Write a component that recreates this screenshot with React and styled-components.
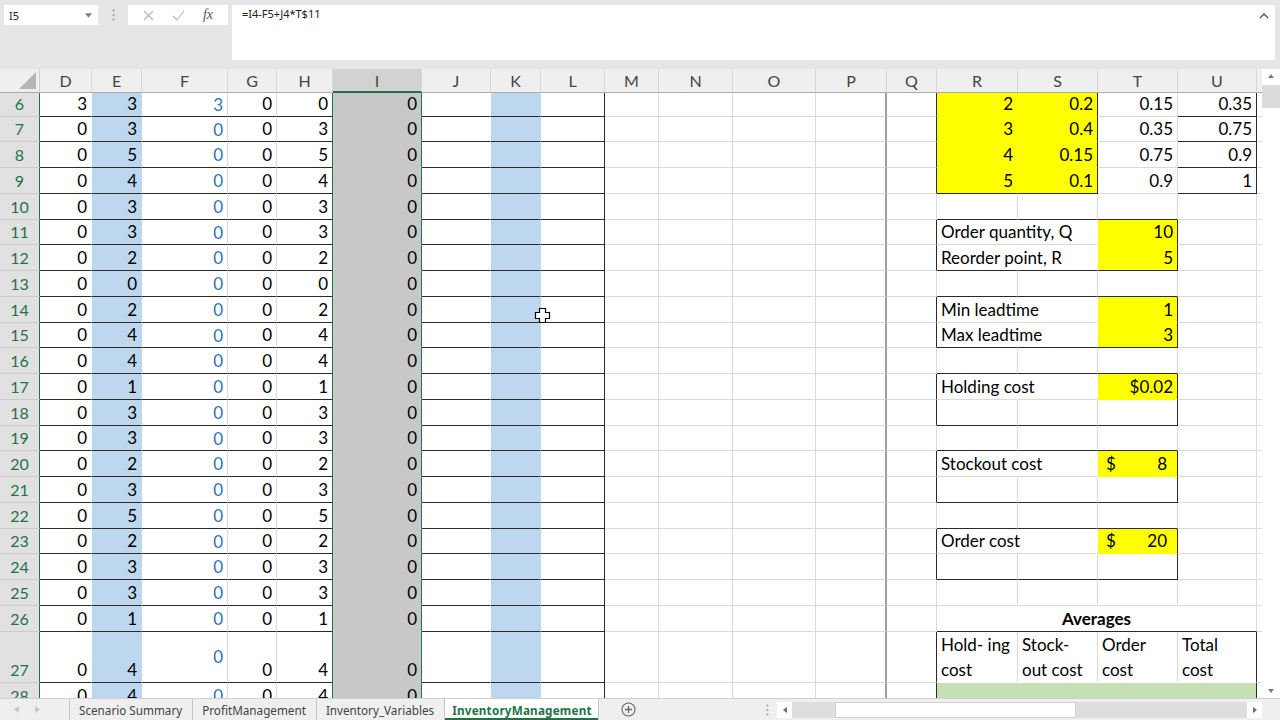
import React from 'react';
import styled, { createGlobalStyle, css } from 'styled-components';

const GRID = '#dadada';
const INK = '#2a2a2a';
const SEL_GREEN = '#217346';
const BLUE = '#bdd7ee';
const YELLOW = '#ffff00';
const GREEN_FILL = '#c6e0b4';
const SEL_GRAY = '#c8c8c8';

const COLS = ['D', 'E', 'F', 'G', 'H', 'I', 'J', 'K', 'L', 'M', 'N', 'O', 'P', 'Q', 'R', 'S', 'T', 'U', 'V'];
const WIDTHS = [52, 50, 86, 49, 56, 89, 69, 50, 64, 54, 74, 83, 71, 50, 81, 80, 80, 79];
const ROWS = Array.from({ length: 23 }, (_, i) => i + 6);

// ---- sheet data ----
const cells = {};
const get = (c, r) => (cells[c + r] = cells[c + r] || {});
const set = (c, r, props) => Object.assign(get(c, r), props);
const colIdx = c => COLS.indexOf(c);
const prevCol = c => COLS[colIdx(c) - 1];
const span = (a, b) => COLS.slice(colIdx(a), colIdx(b) + 1);

const box = (c1, c2, r1, r2) => {
  span(c1, c2).forEach(c => {
    get(c, r1 - 1).b = INK;
    get(c, r2).b = INK;
  });
  for (let r = r1; r <= r2; r++) {
    get(prevCol(c1), r).r = INK;
    get(c2, r).r = INK;
  }
};

const demand = [3, 3, 5, 4, 3, 3, 2, 0, 2, 4, 4, 1, 3, 3, 2, 3, 5, 2, 3, 3, 1, 4, 4];
ROWS.forEach((r, i) => {
  const first = i === 0;
  set('D', r, { v: first ? 3 : 0, b: INK });
  set('E', r, { v: demand[i], fill: BLUE, b: INK });
  set('F', r, { v: first ? 3 : 0, color: '#2e75b6', b: INK, valign: 'center' });
  set('G', r, { v: 0, b: INK });
  set('H', r, { v: first ? 0 : demand[i], b: INK, r: SEL_GREEN });
  set('I', r, { v: 0, fill: SEL_GRAY, r: SEL_GREEN });
  set('J', r, { b: INK });
  set('K', r, { fill: BLUE, b: INK });
  set('L', r, { b: INK, r: INK });
  set('P', r, { split: true });
});

[[2, 0.2, 0.15, 0.35], [3, 0.4, 0.35, 0.75], [4, 0.15, 0.75, 0.9], [5, 0.1, 0.9, 1]].forEach(
  ([a, b, c, d], i) => {
    const r = 6 + i;
    set('R', r, { v: a, fill: YELLOW });
    set('S', r, { v: b, fill: YELLOW });
    set('T', r, { v: c });
    set('U', r, { v: d, b: INK, r: INK });
  }
);
box('R', 'S', 6, 9);

const inputs = [
  [11, 'Order quantity, Q', { v: '10' }],
  [12, 'Reorder point, R', { v: '5' }],
  [14, 'Min leadtime', { v: '1' }],
  [15, 'Max leadtime', { v: '3' }],
  [17, 'Holding cost', { v: '$0.02' }],
  [20, 'Stockout cost', { acct: '8' }],
  [23, 'Order cost', { acct: '20' }],
];
inputs.forEach(([r, label, value]) => {
  set('R', r, { v: label, align: 'left', noGrid: true, over: true });
  set('S', r, { noGrid: true });
  set('T', r, { ...value, fill: YELLOW });
});
[[11, 12], [14, 15], [17, 18], [20, 21], [23, 24]].forEach(([a, b]) => box('R', 'T', a, b));

set('R', 26, { v: 'Averages', bold: true, align: 'center', span: 4 });
['S', 'T', 'U'].forEach(c => set(c, 26, { hidden: true }));
[['R', 'Hold- ing', 'cost'], ['S', 'Stock-', 'out cost'], ['T', 'Order', 'cost'], ['U', 'Total', 'cost']].forEach(
  ([c, a, b]) => set(c, 27, { lines: [a, b], align: 'left' })
);
span('R', 'U').forEach(c => set(c, 28, { fill: GREEN_FILL }));
box('R', 'U', 27, 28);

const rightOf = (c, r) => {
  const d = cells[c + r] || {};
  if (d.r) return d.r;
  if (d.fill || d.noGrid) return 'transparent';
  const next = cells[COLS[colIdx(c) + 1] + r];
  if (next && next.fill) return 'transparent';
  return GRID;
};
const belowOf = (c, r) => {
  const d = cells[c + r] || {};
  if (d.b) return d.b;
  if (d.fill) return 'transparent';
  const next = cells[c + (r + 1)];
  if (next && next.fill) return 'transparent';
  return GRID;
};

// ---- styles ----
const GlobalStyle = createGlobalStyle`
  html, body { margin: 0; padding: 0; }
  body {
    background: #e6e6e6;
    overflow: hidden;
    font-family: Lato, "Liberation Sans", sans-serif;
  }
`;

const Window = styled.div`
  width: 1280px;
  height: 720px;
  display: flex;
  flex-direction: column;
  background: #e6e6e6;
  overflow: hidden;
`;

const FormulaBar = styled.div`
  height: 69px;
  box-sizing: border-box;
  display: flex;
  align-items: flex-start;
  padding: 5px 5px 0 4px;
  font-family: "Noto Sans", "Open Sans", sans-serif;
  font-size: 11px;
  color: #222;
`;

const NameBox = styled.div`
  width: 94px;
  height: 20px;
  box-sizing: border-box;
  background: #fff;
  display: flex;
  align-items: center;
  justify-content: space-between;
  padding: 0 6px 0 5px;
`;

const Grip = styled.div`
  width: ${p => p.$w || 30}px;
  height: 20px;
  display: flex;
  align-items: center;
  justify-content: center;
`;

const FxBox = styled.div`
  width: 100px;
  height: 20px;
  background: #fff;
  display: flex;
  align-items: center;
  justify-content: space-around;
  padding: 0 6px;
  box-sizing: border-box;
`;

const Fx = styled.span`
  font-family: "Liberation Serif", serif;
  font-style: italic;
  font-size: 14px;
  color: #555;
`;

const FormulaInput = styled.div`
  flex: 1;
  height: 55px;
  margin-left: 4px;
  background: #fff;
  box-sizing: border-box;
  padding: 2px 6px 0 10px;
  display: flex;
  justify-content: space-between;
  align-items: flex-start;
  line-height: 14px;
`;

const SheetArea = styled.div`
  height: 629px;
  display: flex;
  background: #fff;
`;

const Grid = styled.div`
  position: relative;
  width: 1262px;
  display: grid;
  grid-template-columns: 40px ${WIDTHS.map(w => w + 'px').join(' ')} 1fr;
  grid-template-rows: 24px 23.7px repeat(20, 25.75px) 51.3px 25.75px;
  overflow: hidden;
  font-size: 17px;
  line-height: 19px;
`;

const Corner = styled.div`
  background: #efefef;
  border-right: 1px solid #cfcfcf;
  border-bottom: 1px solid #ababab;
  position: relative;
  &::after {
    content: '';
    position: absolute;
    right: 3px;
    bottom: 3px;
    border-style: solid;
    border-width: 0 0 17px 17px;
    border-color: transparent transparent #b5b5b5 transparent;
  }
`;

const ColHead = styled.div`
  background: #efefef;
  color: #444;
  font-size: 16px;
  display: flex;
  align-items: center;
  justify-content: center;
  border-right: 1px solid #d6d6d6;
  border-bottom: 1px solid #ababab;
  box-sizing: border-box;
  ${p =>
    p.$sel &&
    css`
      background: #d2d2d2;
      color: #1f5e37;
      border-bottom: 2px solid ${SEL_GREEN};
    `}
`;

const RowHead = styled.div`
  background: #e1e1e1;
  color: ${SEL_GREEN};
  font-size: 16px;
  display: flex;
  align-items: flex-end;
  justify-content: center;
  padding-bottom: 3px;
  box-sizing: border-box;
  border-right: 1px solid ${SEL_GREEN};
  border-bottom: 1px solid #cbcbcb;
`;

const Cell = styled.div`
  display: flex;
  align-items: ${p => (p.$valign === 'center' ? 'center' : 'flex-end')};
  justify-content: ${p =>
    p.$align === 'left' ? 'flex-start' : p.$align === 'center' ? 'center' : 'flex-end'};
  padding: 0 4px 3px;
  box-sizing: border-box;
  background: ${p => p.$fill || '#fff'};
  color: ${p => p.$color || '#000'};
  font-weight: ${p => (p.$bold ? 700 : 400)};
  white-space: nowrap;
  border-right: ${p => (p.$split ? '2px solid #9e9e9e' : `1px solid ${p.$r}`)};
  border-bottom: 1px solid ${p => p.$b};
  ${p => p.$span && css`grid-column: span ${p.$span};`}
  ${p => p.$over && css`position: relative; z-index: 1;`}
  ${p =>
    p.$valign === 'center' &&
    css`
      padding-bottom: 0;
    `}
`;

const Wrapped = styled.span`
  align-self: flex-start;
  white-space: normal;
  line-height: 25px;
`;

const Acct = styled.span`
  display: flex;
  justify-content: space-between;
  width: 100%;
  padding: 0 6px 0 4px;
`;

const Cursor = styled.svg`
  position: absolute;
  left: 534px;
  top: 238px;
  z-index: 3;
`;

const VScroll = styled.div`
  width: 18px;
  display: flex;
  flex-direction: column;
  background: #fff;
`;

const ScrollArrow = styled.div`
  height: 14px;
  display: flex;
  align-items: center;
  justify-content: center;
`;

const VThumb = styled.div`
  height: 23px;
  margin-top: 2px;
  background: #dcdcdc;
`;

const Spacer = styled.div`
  flex: ${p => (p.$fixed ? `0 0 ${p.$fixed}px` : 1)};
`;

const TabBar = styled.div`
  height: 22px;
  box-sizing: border-box;
  display: flex;
  align-items: stretch;
  background: #efefef;
  border-top: 1px solid #cfcfcf;
  font-family: "Noto Sans", "Open Sans", sans-serif;
  font-size: 11.7px;
  color: #444;
`;

const NavArrows = styled.div`
  width: 69px;
  display: flex;
  align-items: center;
  justify-content: center;
  gap: 14px;
  padding-right: 16px;
  box-sizing: border-box;
`;

const Tab = styled.div`
  display: flex;
  align-items: center;
  padding: 0 10px 0 9px;
  border-left: 1px solid #c6c6c6;
  ${p =>
    p.$active &&
    css`
      padding: 0 6px 0 7px;
      background: #fff;
      color: ${SEL_GREEN};
      font-weight: 700;
      letter-spacing: 0.2px;
      border-right: 1px solid #c6c6c6;
      box-shadow: inset 0 -2px 0 ${SEL_GREEN};
    `}
`;

const AddSheet = styled.div`
  width: 60px;
  display: flex;
  align-items: center;
  justify-content: center;
`;

const HScroll = styled.div`
  margin-left: auto;
  width: 523px;
  display: flex;
  align-items: center;
`;

const HTrack = styled.div`
  flex: 1;
  height: 16px;
  background: #dedede;
  display: flex;
  align-items: stretch;
`;

const HArrow = styled.div`
  width: 15px;
  background: #fff;
  display: flex;
  align-items: center;
  justify-content: center;
`;

const HThumb = styled.div`
  width: 241px;
  margin-left: 43px;
  background: #fff;
  border: 1px solid #d0d0d0;
  box-sizing: border-box;
`;

const Tri = ({ dir = 'down', color = '#777', size = 6 }) => {
  const pts = {
    down: '0,1 6,1 3,5',
    up: '0,5 6,5 3,1',
    left: '5,0 5,6 1,3',
    right: '1,0 1,6 5,3',
  }[dir];
  return (
    <svg width={size} height={size} viewBox="0 0 6 6">
      <polygon points={pts} fill={color} />
    </svg>
  );
};

const Dots = () => (
  <svg width="3" height="12" viewBox="0 0 3 12">
    {[1.5, 6, 10.5].map(y => (
      <circle key={y} cx="1.5" cy={y} r="1" fill="#9a9a9a" />
    ))}
  </svg>
);

const renderContent = d => {
  if (d.acct)
    return (
      <Acct>
        <span>$</span>
        <span>{d.acct}</span>
      </Acct>
    );
  if (d.lines)
    return (
      <Wrapped>
        {d.lines[0]}
        <br />
        {d.lines[1]}
      </Wrapped>
    );
  return d.v;
};

export default function App() {
  const tabs = ['Scenario Summary', 'ProfitManagement', 'Inventory_Variables', 'InventoryManagement'];
  return (
    <Window>
      <GlobalStyle />
      <FormulaBar>
        <NameBox>
          <span>I5</span>
          <Tri dir="down" color="#808080" size={7} />
        </NameBox>
        <Grip>
          <Dots />
        </Grip>
        <FxBox>
          <svg width="11" height="11" viewBox="0 0 11 11">
            <path d="M1 1l9 9M10 1l-9 9" stroke="#b8b8b8" strokeWidth="1.1" />
          </svg>
          <svg width="13" height="11" viewBox="0 0 13 11">
            <path d="M1 6l4 4L12 1" stroke="#b8b8b8" strokeWidth="1.1" fill="none" />
          </svg>
          <Fx>fx</Fx>
        </FxBox>
        <FormulaInput>
          <span>=I4-F5+J4*T$11</span>
          <svg width="10" height="8" viewBox="0 0 10 8" style={{ marginTop: 5 }}>
            <path d="M1 6l4-4 4 4" stroke="#555" strokeWidth="1.4" fill="none" />
          </svg>
        </FormulaInput>
      </FormulaBar>

      <SheetArea>
        <Grid>
          <Corner />
          {COLS.map(c => (
            <ColHead key={c} $sel={c === 'I'}>
              {c === 'V' ? '' : c}
            </ColHead>
          ))}
          {ROWS.map(r => (
            <React.Fragment key={r}>
              <RowHead>{r}</RowHead>
              {COLS.map(c => {
                const d = cells[c + r] || {};
                if (d.hidden) return null;
                const last = d.span ? COLS[colIdx(c) + d.span - 1] : c;
                return (
                  <Cell
                    key={c}
                    $fill={d.fill}
                    $color={d.color}
                    $align={d.align}
                    $valign={d.valign}
                    $bold={d.bold}
                    $span={d.span}
                    $over={d.over}
                    $split={d.split}
                    $r={rightOf(last, r)}
                    $b={belowOf(c, r)}
                  >
                    {renderContent(d)}
                  </Cell>
                );
              })}
            </React.Fragment>
          ))}
          <Cursor width="17" height="17" viewBox="0 0 17 17">
            <path
              d="M5.5 1.5h6v4h4v6h-4v4h-6v-4h-4v-6h4z"
              fill="#fff"
              stroke="#000"
              strokeWidth="1.2"
            />
          </Cursor>
        </Grid>
        <VScroll>
          <ScrollArrow>
            <Tri dir="up" color="#7a7a7a" size={6} />
          </ScrollArrow>
          <VThumb />
          <Spacer />
          <ScrollArrow>
            <Tri dir="down" color="#7a7a7a" size={6} />
          </ScrollArrow>
        </VScroll>
      </SheetArea>

      <TabBar>
        <NavArrows>
          <Tri dir="left" color="#c4c4c4" size={7} />
          <Tri dir="right" color="#c4c4c4" size={7} />
        </NavArrows>
        {tabs.map(t => (
          <Tab key={t} $active={t === 'InventoryManagement'}>
            {t}
          </Tab>
        ))}
        <AddSheet>
          <svg width="15" height="15" viewBox="0 0 15 15">
            <circle cx="7.5" cy="7.5" r="6.5" stroke="#666" strokeWidth="1.1" fill="none" />
            <path d="M7.5 4v7M4 7.5h7" stroke="#666" strokeWidth="1.3" />
          </svg>
        </AddSheet>
        <HScroll>
          <Grip $w={20}>
            <Dots />
          </Grip>
          <HTrack>
            <HArrow>
              <Tri dir="left" color="#6a6a6a" size={6} />
            </HArrow>
            <HThumb />
            <Spacer />
            <HArrow>
              <Tri dir="right" color="#6a6a6a" size={6} />
            </HArrow>
          </HTrack>
          <Spacer $fixed={18} />
        </HScroll>
      </TabBar>
    </Window>
  );
}
